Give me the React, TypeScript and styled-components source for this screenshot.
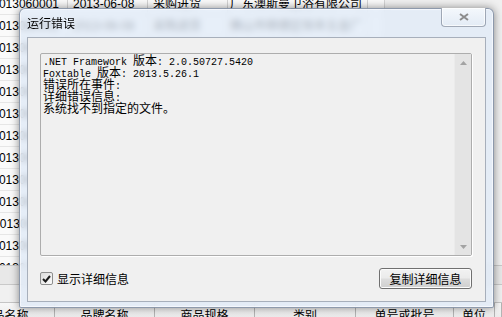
import styled, { createGlobalStyle } from "styled-components";

const GlobalStyle = createGlobalStyle`
  html, body {
    margin: 0;
    padding: 0;
    background: #f0f0f0;
    overflow: hidden;
  }
  body {
    font-family: "Liberation Sans", "Noto Sans CJK SC", sans-serif;
    font-size: 12px;
    color: #000;
  }
`;

const rows = Array.from({ length: 13 }, (_, i) => ({
    id: `20130600${String(i + 1).padStart(2, "0")}`,
    date: "2013-06-08",
    kind: "采购进货",
    vendor: i % 3 === 1 ? "佛山市顺德区恒丰五金厂" : "广东澳斯曼卫浴有限公司",
}));

const headers = ["商品名称", "品牌名称", "商品规格", "类别", "单号或批号", "单位", ""];

const details = [
    [".NET Framework ", "版本", ": 2.0.50727.5420"],
    ["Foxtable ", "版本", ": 2013.5.26.1"],
    ["", "错误所在事件", ":"],
    ["", "详细错误信息", ":"],
    ["", "系统找不到指定的文件。", ""],
];

export default function App() {
    return (
        <Screen>
            <GlobalStyle />
            <Sheet>
                {rows.map((r) => (
                    <Row key={r.id}>
                        <Cell $first>{r.id}</Cell>
                        <Cell>{r.date}</Cell>
                        <Cell>{r.kind}</Cell>
                        <Cell $tight>{r.vendor}</Cell>
                        <Cell />
                        <Cell $empty />
                    </Row>
                ))}
            </Sheet>
            <ScrollBand />
            <Panel />
            <HeaderRow>
                {headers.map((h, i) => (
                    <HeaderCell key={i}>{h}</HeaderCell>
                ))}
            </HeaderRow>

            <Dialog>
                <TitleBar>
                    <Title>运行错误</Title>
                    <CloseButton>
                        <svg width="10" height="8" viewBox="0 0 10 8">
                            <path d="M1 1 L9 7 M9 1 L1 7" stroke="#8c8c8c" strokeWidth="2" fill="none" />
                        </svg>
                    </CloseButton>
                </TitleBar>
                <Client>
                    <TextBox>
                        <TextContent>
                            {details.map((l, i) => (
                                <Line key={i}>
                                    {l[0]}
                                    <Han>{l[1]}</Han>
                                    {l[2]}
                                </Line>
                            ))}
                        </TextContent>
                        <VScroll>
                            <ArrowBox>
                                <svg width="7" height="4" viewBox="0 0 7 4">
                                    <path d="M3.5 0 L7 4 L0 4 Z" fill="#a3a3a3" />
                                </svg>
                            </ArrowBox>
                            <ArrowBox>
                                <svg width="7" height="4" viewBox="0 0 7 4">
                                    <path d="M0 0 L7 0 L3.5 4 Z" fill="#a3a3a3" />
                                </svg>
                            </ArrowBox>
                        </VScroll>
                    </TextBox>
                    <Footer>
                        <CheckLabel>
                            <CheckBox>
                                <svg width="9" height="8" viewBox="0 0 9 8">
                                    <path d="M1 4 L3.5 6.5 L8 1" stroke="#1c1c1c" strokeWidth="2" fill="none" />
                                </svg>
                            </CheckBox>
                            显示详细信息
                        </CheckLabel>
                        <Button>复制详细信息</Button>
                    </Footer>
                </Client>
            </Dialog>
        </Screen>
    );
}

const Screen = styled.div`
    position: relative;
    width: 502px;
    height: 317px;
    overflow: hidden;
    background: #f0f0f0;
    display: flex;
    flex-direction: column;
`;

const Sheet = styled.div`
    flex-shrink: 0;
    height: 272px;
    margin-top: -7px;
    margin-left: -8px;
    overflow: hidden;
`;

const Row = styled.div`
    display: grid;
    grid-template-columns: 76px 80px 80px 140px 17px 1fr;
    height: 22px;
`;

const Cell = styled.div<{ $first?: boolean; $tight?: boolean; $empty?: boolean }>`
    box-sizing: border-box;
    height: 22px;
    line-height: 22px;
    white-space: nowrap;
    overflow: hidden;
    padding: ${(p) => (p.$first ? "0 8px 0 0" : p.$tight ? "0 0 0 2px" : "0 5px")};
    text-align: ${(p) => (p.$first ? "right" : "left")};
    background: ${(p) => (p.$empty ? "transparent" : "#fafafa")};
    border-right: ${(p) => (p.$empty ? "none" : "1px solid #d4d4d4")};
    border-bottom: ${(p) => (p.$empty ? "none" : "1px solid #e6e6e6")};
`;

const ScrollBand = styled.div`
    flex-shrink: 0;
    height: 20px;
    box-sizing: border-box;
    background: #e8e8e8;
    border-top: 1px solid #c9c9c9;
    border-bottom: 1px solid #c9c9c9;
`;

const Panel = styled.div`
    flex-shrink: 0;
    height: 17px;
    background: #f0f0f0;
`;

const HeaderRow = styled.div`
    flex-shrink: 0;
    display: grid;
    grid-template-columns: 100px 100px 100px 101px 98px 41px 1fr;
    height: 24px;
    margin-left: -45px;
    border-top: 1px solid #c5c5c5;
    background: linear-gradient(#f8f8f8, #e2e2e2);
`;

const HeaderCell = styled.div`
    box-sizing: border-box;
    text-align: center;
    line-height: 24px;
    font-family: "Noto Sans CJK SC", sans-serif;
    font-size: 12px;
    white-space: nowrap;
    overflow: hidden;
    border-right: 1px solid #b4b4b4;
`;

const Dialog = styled.div`
    position: absolute;
    left: 19px;
    top: 8px;
    width: 475px;
    height: 300px;
    box-sizing: border-box;
    padding: 0 7px 5px 7px;
    display: flex;
    flex-direction: column;
    border: 1px solid rgba(70, 85, 110, 0.55);
    border-radius: 6px 6px 2px 2px;
    background: rgba(224, 235, 248, 0.74);
    backdrop-filter: blur(3px);
    box-shadow: 0 0 9px rgba(0, 0, 0, 0.45), inset 0 0 0 1px rgba(255, 255, 255, 0.55);
`;

const TitleBar = styled.div`
    height: 28px;
    flex-shrink: 0;
    display: flex;
    justify-content: space-between;
    align-items: flex-start;
`;

const Title = styled.span`
    margin-top: 5px;
    font-family: "Noto Sans CJK SC", sans-serif;
    font-size: 12px;
    line-height: 17px;
    color: #000;
`;

const CloseButton = styled.div`
    width: 45px;
    height: 19px;
    margin-top: -1px;
    box-sizing: border-box;
    display: flex;
    align-items: center;
    justify-content: center;
    border: 1px solid rgba(80, 92, 115, 0.5);
    border-top: none;
    border-radius: 0 0 4px 4px;
    background: linear-gradient(#f4f8fc, #e3ebf5);
    box-shadow: inset 0 0 0 1px rgba(255, 255, 255, 0.7);
`;

const Client = styled.div`
    flex: 1;
    box-sizing: border-box;
    background: #f0f0f0;
    border: 1px solid #a7afbb;
    padding: 15px 13px 0 12px;
    display: flex;
    flex-direction: column;
`;

const TextBox = styled.div`
    height: 203px;
    box-sizing: border-box;
    display: flex;
    border: 1px solid #adadad;
    border-radius: 2px;
    background: #f0f0f0;
    box-shadow: 1px 1px 0 #fff;
`;

const TextContent = styled.div`
    flex: 1;
    padding: 0 2px;
    font-family: "Liberation Mono", "Noto Sans CJK SC", monospace;
    font-size: 10px;
    color: #000;
`;

const Line = styled.div`
    height: 12px;
    line-height: 12px;
    white-space: pre;
`;

const Han = styled.span`
    font-family: "Noto Sans CJK SC", sans-serif;
    font-size: 12px;
    line-height: 12px;
`;

const VScroll = styled.div`
    width: 17px;
    box-sizing: border-box;
    display: flex;
    flex-direction: column;
    justify-content: space-between;
    background: #e4e4e4;
    border-left: 1px solid #ebebeb;
`;

const ArrowBox = styled.div`
    height: 17px;
    display: flex;
    align-items: center;
    justify-content: center;
`;

const Footer = styled.div`
    margin-top: 12px;
    height: 21px;
    display: flex;
    align-items: center;
    justify-content: space-between;
`;

const CheckLabel = styled.label`
    display: flex;
    align-items: center;
    gap: 4px;
    font-family: "Noto Sans CJK SC", sans-serif;
    font-size: 12px;
    color: #000;
`;

const CheckBox = styled.span`
    width: 13px;
    height: 13px;
    box-sizing: border-box;
    display: flex;
    align-items: center;
    justify-content: center;
    border: 1px solid #8e8f8f;
    border-radius: 2px;
    background: linear-gradient(135deg, #dcdcdc, #fbfbfb);
`;

const Button = styled.button`
    width: 93px;
    height: 21px;
    padding: 0;
    box-sizing: border-box;
    border: 1px solid #707070;
    border-radius: 3px;
    background: linear-gradient(#f2f2f2 0%, #ebebeb 48%, #dddddd 52%, #cfcfcf 100%);
    box-shadow: inset 0 0 0 1px #fcfcfc;
    font-family: "Noto Sans CJK SC", sans-serif;
    font-size: 12px;
    line-height: 19px;
    color: #000;
`;
